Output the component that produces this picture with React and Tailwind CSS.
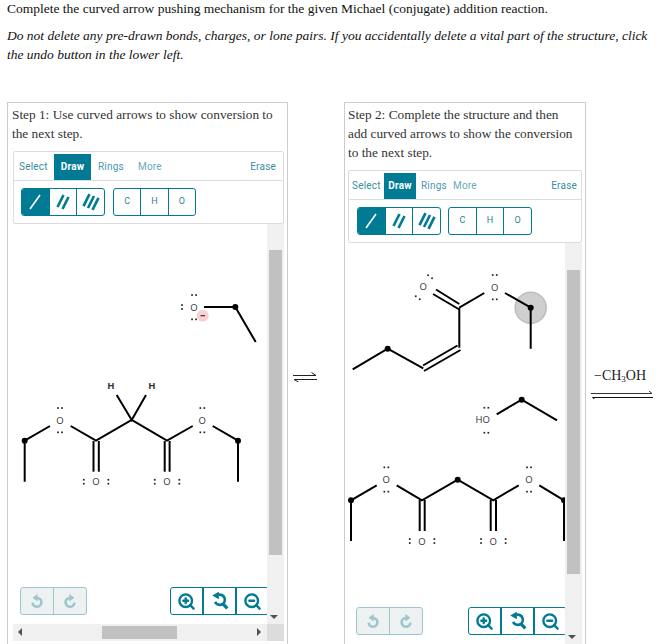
import React from 'react';
import { ZoomIn, ZoomOut } from 'lucide-react';

const teal = '#007b93';

const Bonds = ({ lines }) => (
    <g stroke="#000" strokeWidth="2" fill="none">
        {lines.map((pts, i) => <polyline key={i} points={pts} />)}
    </g>
);

const Atom = ({ x, y, t = 'O', bold }) => (
    <text x={x} y={y + 3.5} textAnchor="middle" fontSize="9.5" fontWeight={bold ? 700 : 400} fontFamily="'Open Sans', sans-serif" fill="#333">{t}</text>
);

// lone pair: two small squares, vertical "v" turns it into a colon
const Pair = ({ x, y, v, diag }) => {
    const dx = v ? 0 : 2;
    const dy = v ? 2 : diag ? 1.5 : 0;
    return (
        <g fill="#222">
            <rect x={x - dx - 0.8} y={y - dy - 0.8} width="1.7" height="1.7" />
            <rect x={x + dx - 0.8} y={y + dy - 0.8} width="1.7" height="1.7" />
        </g>
    );
};

const Node = ({ x, y }) => <circle cx={x} cy={y} r="3" fill="#000" />;

const CarbonylO = ({ x, y }) => (
    <>
        <Atom x={x} y={y} />
        <Pair x={x - 12.3} y={y} v />
        <Pair x={x + 12.3} y={y} v />
    </>
);

const EtherO = ({ x, y }) => (
    <>
        <Atom x={x} y={y} />
        <Pair x={x} y={y - 12} />
        <Pair x={x} y={y + 12.3} />
    </>
);

const StepOneDrawing = () => (
    <svg viewBox="13 224 254 400" className="block w-[254px] h-[400px]">
        <circle cx="202.7" cy="315.7" r="6" fill="#fbd0d2" />
        <rect x="200.5" y="315" width="4.5" height="1.3" fill="#444" />
        <Bonds lines={[
            '204,307 235.3,307 255.7,342',
            '116.7,395 131.7,420 146,395',
            '24.7,481.7 24.7,440.7 50,426',
            '70.7,426 96,440.7 131.7,420 167,440.7 192.7,426',
            '212.7,426 238,440.7 238,481.7',
            '93.5,441 93.5,471.7', '98.8,441 98.8,471.7',
            '164.7,441 164.7,471.7', '169.6,441 169.6,471.7',
        ]} />
        <Node x={235.3} y={307} />
        <Node x={24.7} y={440.7} />
        <Node x={238} y={440.7} />
        <EtherO x={194} y={307} />
        <Pair x={182} y={307} v />
        <Atom x={111} y={385} t="H" bold />
        <Atom x={152} y={385} t="H" bold />
        <EtherO x={60} y={420} />
        <EtherO x={202.3} y={420} />
        <CarbonylO x={96} y={481.7} />
        <CarbonylO x={167} y={481.7} />
    </svg>
);

const StepTwoDrawing = () => (
    <svg viewBox="348 242 217 401" className="block w-[217px] h-[401px]">
        <circle cx="530.7" cy="306.7" r="15.5" fill="#cfcfcf" stroke="#bdbdbd" strokeWidth="1.5" />
        <Bonds lines={[
            '436,288.5 459.3,303', '433,293 459.3,308.5',
            '459.3,306.7 484.3,292', '505,292 530.7,306.7 530.7,347.7',
            '459.3,306.7 459.3,346.7',
            '457.5,344.5 423,364.5', '460.5,349 424,370',
            '423.3,367.3 387.7,347.7 352.7,368.3',
            '496.7,413.3 521.7,398.7 557,419.3',
            '351,540 351,499.3 376.7,484.3',
            '396.7,484.3 422,499.3 457.7,478.7 493.3,499.3 518.7,484.3',
            '539.3,484.3 564,499.3 564,540',
            '419.7,499 419.7,530', '424.7,499 424.7,530',
            '490.7,499 490.7,530', '496,499 496,530',
        ]} />
        <Node x={530.7} y={306.7} />
        <Node x={387.7} y={347.7} />
        <Node x={521.7} y={398.7} />
        <Node x={351} y={499.3} />
        <Node x={457.7} y={478.7} />
        <Node x={564} y={499.3} />
        <Atom x={423.3} y={285.7} />
        <Pair x={430} y={275.7} diag />
        <Pair x={417.7} y={296.7} diag />
        <EtherO x={494.7} y={286} />
        <Atom x={482.7} y={418.7} t="HO" />
        <Pair x={486.3} y={406.7} />
        <Pair x={486.3} y={431.7} />
        <EtherO x={386.3} y={478.3} />
        <EtherO x={529} y={478.3} />
        <CarbonylO x={422} y={540} />
        <CarbonylO x={493.3} y={540} />
    </svg>
);

const Slashes = ({ n, color }) => {
    if (n === 1) {
        return (
            <svg viewBox="0 0 24 20" className="w-[24px] h-[20px]">
                <line x1="7" y1="17" x2="17" y2="3" stroke={color} strokeWidth="1.6" />
            </svg>
        );
    }
    const offsets = n === 2 ? [-2.5, 2.5] : [-4.5, 0, 4.5];
    return (
        <svg viewBox="0 0 24 20" className="w-[24px] h-[20px]">
            {offsets.map(o => <line key={o} x1={9 + o} y1={16 + o * 0.4} x2={15 + o} y2={4 + o * 0.4} stroke={color} strokeWidth="2.6" />)}
        </svg>
    );
};

const Toolbar = ({ selectClass, drawClass, ringsClass, moreClass, eraseClass, rowClass, bondClass, atomClass, outerClass }) => (
    <div className={`border border-[#dcdcdc] rounded-[2px] bg-white ${outerClass}`} style={{ fontFamily: "Roboto, sans-serif" }}>
        <div className="flex items-center h-[29px] border-b border-[#dcdcdc] pt-[1px] text-[10px] tracking-[0.2px]">
            <span className={`text-[#3a8ea3] ${selectClass}`}>Select</span>
            <span className={`h-[26px] flex items-center justify-center bg-[#007b93] text-white font-bold ${drawClass}`}>Draw</span>
            <span className={`text-[#4b98ac] ${ringsClass}`}>Rings</span>
            <span className={`text-[#6aa9ba] ${moreClass}`}>More</span>
            <span className={`ml-auto text-[#3a8ea3] ${eraseClass}`}>Erase</span>
        </div>
        <div className={`flex items-center ${rowClass}`}>
            <div className={`flex h-[28px] border border-[#007b93] rounded-[3px] overflow-hidden ${bondClass}`}>
                <span className="flex-1 flex items-center justify-center bg-[#007b93]"><Slashes n={1} color="#fff" /></span>
                <span className="flex-1 flex items-center justify-center border-l border-[#007b93]"><Slashes n={2} color={teal} /></span>
                <span className="flex-1 flex items-center justify-center border-l border-[#007b93]"><Slashes n={3} color={teal} /></span>
            </div>
            <div className={`flex h-[28px] border border-[#007b93] rounded-[3px] overflow-hidden text-[9px] text-[#2f8299] ${atomClass}`}>
                <span className="flex-1 flex items-center justify-center">C</span>
                <span className="flex-1 flex items-center justify-center border-l border-[#007b93]">H</span>
                <span className="flex-1 flex items-center justify-center border-l border-[#007b93]">O</span>
            </div>
        </div>
    </div>
);

const UndoIcon = ({ flip }) => (
    <svg viewBox="0 0 14 16" className={`w-[14px] h-[16px] ${flip ? '-scale-x-100' : ''}`} fill="none">
        <path d="M7 5A4.4 4.4 0 1 1 2.6 9.6" stroke="#9cc5cf" strokeWidth="2.6" />
        <path d="M7.6 1 L7.6 8.6 L2.6 4.8 Z" fill="#9cc5cf" />
    </svg>
);

const ResetIcon = () => (
    <svg viewBox="0 0 18 18" className="w-[20px] h-[20px]" fill="none">
        <path d="M7.6 3.4A4.6 4.6 0 1 1 4.6 9.8" stroke={teal} strokeWidth="2.4" />
        <path d="M8 0.6 L8 7.4 L2 4 Z" fill={teal} />
        <path d="M11.4 11.4 L15.6 15.6" stroke={teal} strokeWidth="3" />
    </svg>
);

const CanvasButtons = ({ undoClass, zoomClass }) => (
    <>
        <div className={`absolute flex w-[67px] h-[28px] border border-[#9cc5cf] rounded-[3px] bg-[#eef1f2] ${undoClass}`}>
            <span className="flex-1 flex items-center justify-center"><UndoIcon /></span>
            <span className="flex-1 flex items-center justify-center border-l border-[#9cc5cf]"><UndoIcon flip /></span>
        </div>
        <div className={`absolute flex w-[99px] h-[28px] border border-[#007b93] rounded-[3px] bg-white ${zoomClass}`}>
            <span className="flex-1 flex items-center justify-center"><ZoomIn size={19} color={teal} strokeWidth={3} /></span>
            <span className="flex-1 flex items-center justify-center border-l-2 border-[#007b93]"><ResetIcon /></span>
            <span className="flex-1 flex items-center justify-center border-l-2 border-[#007b93]"><ZoomOut size={19} color={teal} strokeWidth={3} /></span>
        </div>
    </>
);

const VScroll = ({ thumbClass, trackClass }) => (
    <div className={`relative w-[17px] bg-[#f0f0f0] shrink-0 ${trackClass}`}>
        <div className={`mx-auto w-[13px] bg-[#c1c1c1] ${thumbClass}`}></div>
        <div className="absolute left-[3px] bottom-[5px] w-0 h-0 border-x-[4px] border-x-transparent border-t-[4px] border-t-[#505050]"></div>
    </div>
);

const Equilibrium = () => (
    <svg viewBox="0 0 24 10" className="w-[24px] h-[10px]">
        <path d="M0 3.5H23L18.5 0.5" fill="none" stroke="#222" strokeWidth="1" />
        <path d="M24 7.5H1L5.5 10" fill="none" stroke="#222" strokeWidth="1" />
    </svg>
);

const Elimination = () => (
    <svg viewBox="0 0 62 8" className="block w-[62px] h-[8px]">
        <path d="M0 2.5H61L58 0" fill="none" stroke="#333" strokeWidth="1" />
        <path d="M62 6.5H1.5L4 8.5" fill="none" stroke="#111" strokeWidth="1" />
    </svg>
);

const App = () => {
    return (
        <div className="w-[668px] h-[644px] overflow-hidden bg-white text-[14px]" style={{ fontFamily: "'Liberation Serif', serif" }}>
            <div className="pl-[7px] pt-[1px] text-[#111] text-[13.5px]">
                <p className="leading-[16px]">Complete the curved arrow pushing mechanism for the given Michael (conjugate) addition reaction.</p>
                <p className="mt-[9px] leading-[19px] italic w-[650px]">Do not delete any pre-drawn bonds, charges, or lone pairs. If you accidentally delete a vital part of the structure, click the undo button in the lower left.</p>
            </div>

            <div className="flex mt-[38px] pl-[7px] h-[542px]">
                <div className="w-[281px] border border-[#cccccc] border-b-0 px-[5px] pt-[2px] shrink-0">
                    <div className="text-[#333] text-[13.3px] leading-[19px] h-[39px] -ml-[1px]">Step 1: Use curved arrows to show conversion to the next step.</div>
                    <Toolbar
                        outerClass="w-[271px] mt-[7px] h-[73px]"
                        selectClass="pl-[5px] pr-[6px] w-[40px]"
                        drawClass="w-[37px]"
                        ringsClass="pl-[7px] w-[40px]"
                        moreClass="pl-[7px]"
                        eraseClass="pr-[7px]"
                        rowClass="pl-[7px] gap-[8px] pt-[7px]"
                        bondClass="w-[84px]"
                        atomClass="w-[83px]"
                    />
                    <div className="flex h-[400px]">
                        <div className="relative w-[254px]">
                            <StepOneDrawing />
                            <CanvasButtons undoClass="left-[7px] top-[363px]" zoomClass="left-[157px] top-[363px]" />
                        </div>
                        <VScroll thumbClass="h-[305px] mt-[26px]" trackClass="h-[400px]" />
                    </div>
                    <div className="relative flex h-[17px] w-[271px] bg-[#f0f0f0]">
                        <div className="absolute left-[89px] top-[2px] w-[75px] h-[13px] bg-[#c1c1c1]"></div>
                        <div className="absolute left-[5px] top-[4px] w-0 h-0 border-y-[4px] border-y-transparent border-r-[4px] border-r-[#505050]"></div>
                        <div className="absolute left-[244px] top-[4px] w-0 h-0 border-y-[4px] border-y-transparent border-l-[4px] border-l-[#505050]"></div>
                        <div className="absolute right-0 top-0 w-[17px] h-[17px] bg-[#dcdcdc]"></div>
                    </div>
                </div>

                <div className="w-[56px] shrink-0 pt-[270px] pl-[5px]">
                    <Equilibrium />
                </div>

                <div className="w-[242px] border border-[#cccccc] border-b-0 px-[3px] pt-[2px] shrink-0">
                    <div className="text-[#333] text-[13.3px] leading-[19px] h-[58px] w-[230px]">Step 2: Complete the structure and then add curved arrows to show the conversion to the next step.</div>
                    <Toolbar
                        outerClass="w-[234px] mt-[7px] h-[73px]"
                        selectClass="pl-[3px] w-[35px]"
                        drawClass="w-[32px]"
                        ringsClass="pl-[5px] w-[38px]"
                        moreClass="-ml-[1px]"
                        eraseClass="pr-[4px]"
                        rowClass="pl-[8px] gap-[7px] pt-[7px]"
                        bondClass="w-[84px]"
                        atomClass="w-[84px]"
                    />
                    <div className="flex h-[401px]">
                        <div className="relative w-[217px]">
                            <StepTwoDrawing />
                            <CanvasButtons undoClass="left-[8px] top-[364px]" zoomClass="left-[120px] top-[364px]" />
                        </div>
                        <VScroll thumbClass="h-[304px] mt-[27px]" trackClass="h-[401px]" />
                    </div>
                </div>

                <div className="pl-[5px] pt-[266px] shrink-0">
                    <div className="pl-[3px] leading-[16px] text-[#222]">−CH<sub className="text-[9px]">3</sub>OH</div>
                    <div className="mt-[7px]"><Elimination /></div>
                </div>
            </div>
        </div>
    );
};

export default App;
